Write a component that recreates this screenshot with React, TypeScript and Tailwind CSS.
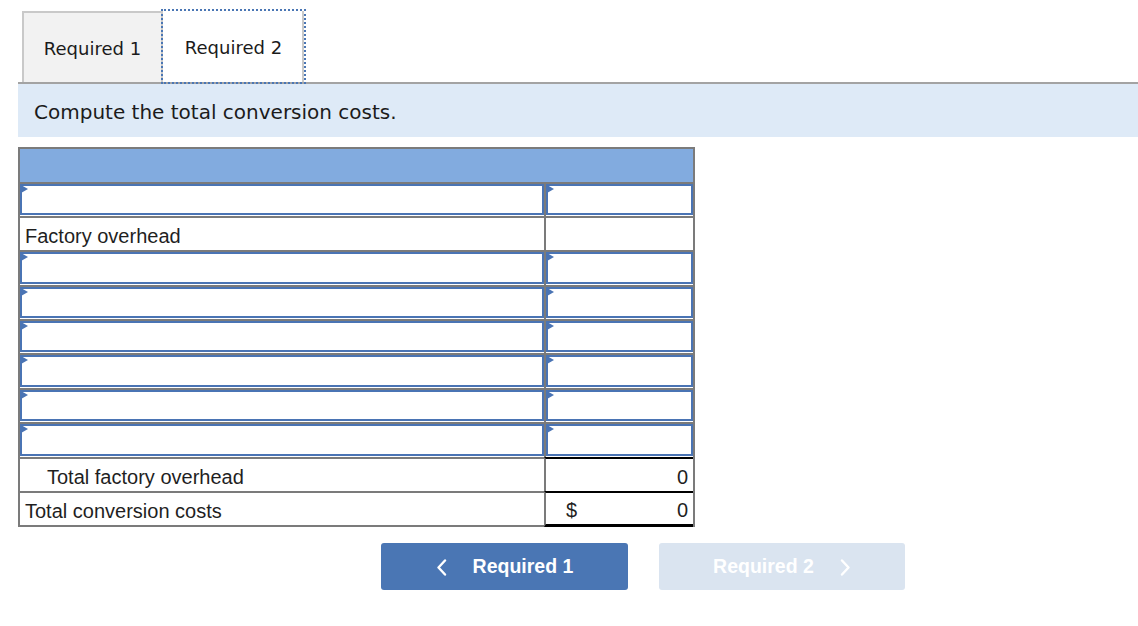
import React from 'react';

const rows = [
  { kind: 'input', h: 'h-[34px]' },
  { kind: 'text', label: 'Factory overhead', h: 'h-[34px]' },
  { kind: 'input', h: 'h-[35px]' },
  { kind: 'input', h: 'h-[34px]' },
  { kind: 'input', h: 'h-[34px]' },
  { kind: 'input', h: 'h-[35px]' },
  { kind: 'input', h: 'h-[34px]' },
  { kind: 'input', h: 'h-[35px]' },
  { kind: 'subtotal', label: 'Total factory overhead', h: 'h-[34px]' },
  { kind: 'total', label: 'Total conversion costs', h: 'h-[36px]' }
];

function InputBox() {
  return (
    <div className="h-full w-full pb-[1px]">
      <div className="relative h-full w-full border-2 border-[#4a74b4] bg-white">
        <div className="absolute -left-[1px] -top-[1px] h-0 w-0 border-y-[4px] border-l-[7px] border-y-transparent border-l-[#4a74b4]" />
      </div>
    </div>
  );
}

function Chevron({ dir }: { dir: 'left' | 'right' }) {
  return (
    <svg width="11" height="17" viewBox="0 0 11 17" fill="none">
      <polyline
        points={dir === 'left' ? '9,1.5 2.5,8.5 9,15.5' : '2,1.5 8.5,8.5 2,15.5'}
        stroke="white"
        strokeWidth="2.4"
        strokeLinecap="round"
        strokeLinejoin="round"
      />
    </svg>
  );
}

export default function App() {
  return (
    <div className="min-h-[626px] w-[1138px] bg-white pl-[18px] pt-[11px]">
      {/* tabs */}
      <div className="flex border-b-2 border-[#a3a3a3] font-['DejaVu_Sans',sans-serif] text-[18px] text-[#1b1b1b]">
        <div className="ml-[4px] flex h-[71px] w-[141px] items-center justify-center border-2 border-b-0 border-[#c9c9c9] bg-[#f2f2f2] pt-[2px]">
          Required 1
        </div>
        <div className="flex h-[71px] w-[141px] items-center justify-center border-r-2 border-[#c9c9c9] bg-white pt-[2px] pl-[2px] outline-2 outline-offset-0 outline-dotted outline-[#4a76b4]">
          Required 2
        </div>
      </div>

      <div className="flex h-[53px] items-center bg-[#deeaf7] pl-[16px] pt-[3px] font-['DejaVu_Sans',sans-serif] text-[20px] text-[#1b1b1b]">
        Compute the total conversion costs.
      </div>

      {/* table */}
      <div className="mt-[10px] w-[677px] border-2 border-b-0 border-[#7b7b7b] font-['Liberation_Sans',Arial,sans-serif] text-[20px] text-[#1f1f1f]">
        <div className="h-[33px] bg-[#82abdf]" />
        {rows.map((r, i) => {
          const last = r.kind === 'total';
          const pad =
            r.kind === 'input' ? '' : r.kind === 'subtotal' ? 'pl-[27px] pt-[3px]' : 'pl-[5px] pt-[3px]';
          return (
            <div key={i} className={`flex ${r.h}`}>
              <div
                className={`flex w-[524px] items-center border-t-2 border-[#7b7b7b] ${
                  last ? 'border-b-2' : ''
                } ${pad}`}
              >
                {r.kind === 'input' ? <InputBox /> : r.label}
              </div>
              <div
                className={`flex w-[149px] items-center border-l-2 border-t-2 border-l-[#7b7b7b] ${
                  r.kind === 'subtotal' || last ? 'border-t-black pt-[3px]' : 'border-t-[#7b7b7b]'
                } ${last ? 'border-b-[3px] border-b-black' : ''}`}
              >
                {r.kind === 'input' && <InputBox />}
                {r.kind === 'subtotal' && <span className="ml-auto pr-[5px]">0</span>}
                {last && (
                  <>
                    <span className="pl-[20px]">$</span>
                    <span className="ml-auto pr-[5px]">0</span>
                  </>
                )}
              </div>
            </div>
          );
        })}
      </div>

      {/* buttons */}
      <div className="mt-[16px] flex gap-[31px] pl-[363px] font-['Liberation_Sans',Arial,sans-serif] text-[19.5px] font-bold text-white">
        <button className="flex h-[47px] w-[247px] items-center justify-center gap-[26px] rounded-[3px] bg-[#4a76b4] pt-[1px]">
          <Chevron dir="left" />
          <span>Required 1</span>
        </button>
        <button className="flex h-[47px] w-[246px] items-center justify-center gap-[26px] rounded-[3px] bg-[#dae4f0] pt-[1px]">
          <span>Required 2</span>
          <Chevron dir="right" />
        </button>
      </div>
    </div>
  );
}
